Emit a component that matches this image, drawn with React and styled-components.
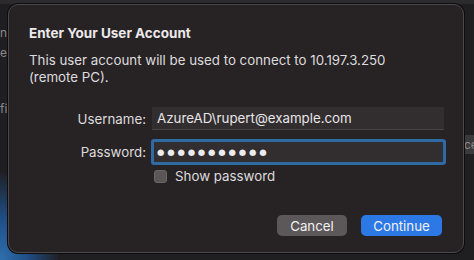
import React from "react";
import styled, { createGlobalStyle } from "styled-components";

const Global = createGlobalStyle`
  html, body {
    margin: 0;
    padding: 0;
    width: 474px;
    height: 260px;
    overflow: hidden;
    background: #1d1c1f;
  }
  * { box-sizing: border-box; }
`;

const Desktop = styled.div`
  position: relative;
  width: 474px;
  height: 260px;
  overflow: hidden;
  font-family: "Inter", "Liberation Sans", sans-serif;
  background:
    radial-gradient(ellipse 60px 90px at 0px 260px, #2f6fae 0%, #1f4f86 45%, rgba(31,79,134,0) 100%),
    linear-gradient(180deg, #2b2a2d 0px, #2b2a2d 4px, #1f1e21 4px, #1f1e21 100%);
`;

// scraps of the window that sits behind the sheet
const BackText = styled.span`
  position: absolute;
  left: ${p => p.x}px;
  top: ${p => p.y}px;
  color: #8a888c;
  font-size: 12px;
  white-space: nowrap;
  background: ${p => p.bg || "transparent"};
  padding: ${p => (p.bg ? "2px 1px" : "0")};
`;

const Sheet = styled.div`
  position: absolute;
  left: 8px;
  top: 4px;
  width: 456px;
  height: 249px;
  border-radius: 10px;
  background: #272325;
  border: 1px solid #4b484a;
  box-shadow: 0 0 0 1px #0d0c0e;
  padding: 19px 20px 0 20px;
  display: flex;
  flex-direction: column;
  color: #e4e1e3;
`;

const Title = styled.h1`
  margin: 0;
  font-size: 13.5px;
  font-weight: 700;
  line-height: 18px;
  color: #ece9eb;
`;

const Message = styled.p`
  margin: 10px 0 0 0;
  font-size: 13.3px;
  line-height: 17px;
  color: #dedbdd;
`;

const Form = styled.div`
  margin-top: 21px;
  display: grid;
  grid-template-columns: 117px 292px;
  column-gap: 6px;
  row-gap: 9px;
  align-items: center;
`;

const Label = styled.label`
  text-align: right;
  font-size: 13.3px;
  color: #dedbdd;
`;

const Field = styled.div`
  height: ${p => (p.focused ? 26 : 23)}px;
  margin-left: ${p => (p.focused ? -1 : 0)}px;
  width: ${p => (p.focused ? 295 : 292)}px;
  background: #322d2f;
  border: ${p => (p.focused ? "3px solid #2e6aa3" : "none")};
  border-bottom: ${p => (p.focused ? "3px solid #2e6aa3" : "1px solid #4a4547")};
  border-radius: ${p => (p.focused ? 3 : 1)}px;
  padding: 0 ${p => (p.focused ? 3 : 5)}px;
  display: flex;
  align-items: center;
  font-size: 13.3px;
  color: #e8e5e7;
`;

const Dots = styled.span`
  font-family: "DejaVu Sans", sans-serif;
  font-size: 8.5px;
  letter-spacing: 2.8px;
  color: #ecebed;
`;

const CheckRow = styled.div`
  grid-column: 2;
  display: flex;
  align-items: center;
  gap: 8px;
  margin-top: -6px;
  padding-left: 2px;
  font-size: 13.3px;
  line-height: 16px;
  color: #dedbdd;
`;

const Box = styled.span`
  width: 13px;
  height: 13px;
  border-radius: 3px;
  background: #5a5658;
  border: 1px solid #6a6668;
`;

const Buttons = styled.div`
  margin-top: auto;
  margin-bottom: 16px;
  display: flex;
  justify-content: flex-end;
  gap: 14px;
  padding-right: 1px;
`;

const Button = styled.button`
  height: 21px;
  width: ${p => p.w}px;
  border: none;
  border-radius: 5px;
  font-family: inherit;
  font-size: 13.3px;
  color: #f2f0f2;
  background: ${p => (p.primary ? "#2c79e6" : "#5c5759")};
  padding: 0;
`;

export default function App() {
  return (
    <>
      <Global />
      <Desktop>
        <BackText x={0} y={25}>n</BackText>
        <BackText x={0} y={45}>e</BackText>
        <BackText x={0} y={101}>fi</BackText>
        <BackText x={463} y={135} bg="#3a393c">ce</BackText>
        <Sheet>
          <Title>Enter Your User Account</Title>
          <Message>
            This user account will be used to connect to 10.197.3.250
            <br />
            (remote PC).
          </Message>
          <Form>
            <Label>Username:</Label>
            <Field>AzureAD\rupert@example.com</Field>
            <Label>Password:</Label>
            <Field focused>
              <Dots>●●●●●●●●●●●</Dots>
            </Field>
            <CheckRow>
              <Box />
              Show password
            </CheckRow>
          </Form>
          <Buttons>
            <Button w={70}>Cancel</Button>
            <Button primary w={81}>Continue</Button>
          </Buttons>
        </Sheet>
      </Desktop>
    </>
  );
}
